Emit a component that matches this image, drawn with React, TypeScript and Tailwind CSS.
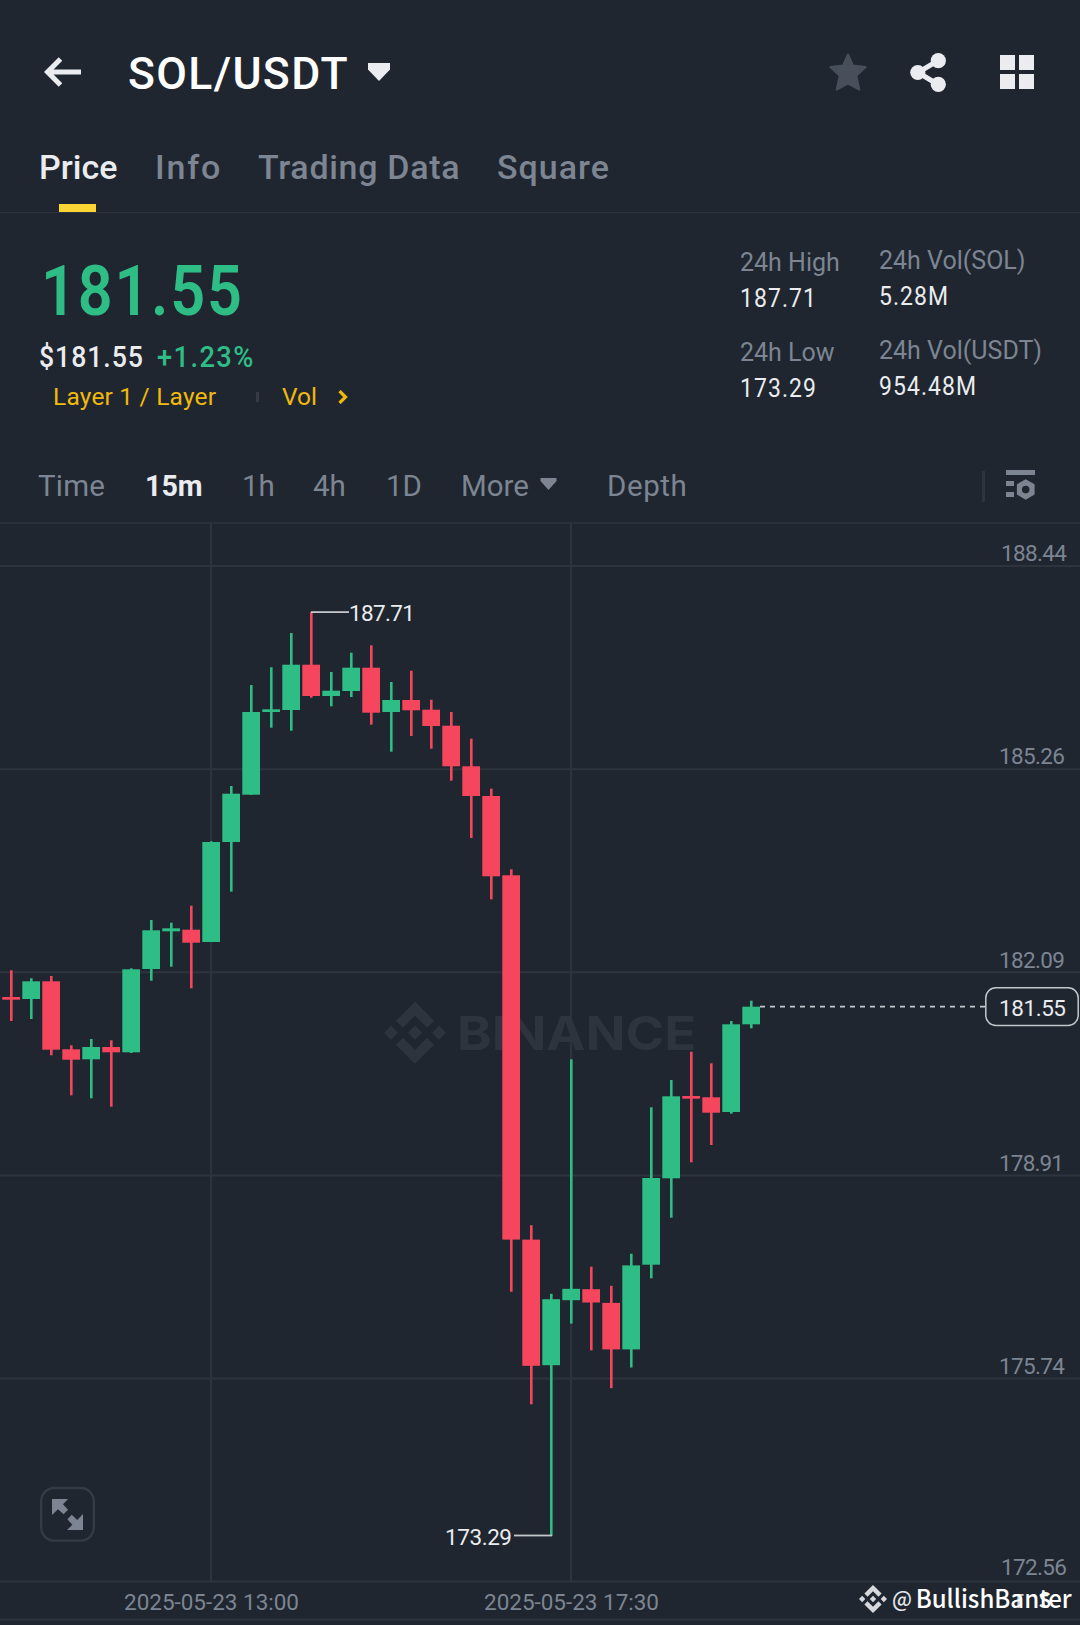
import React from "react";

type Candle = [high: number, top: number, bottom: number, low: number, up: boolean];

const GREEN = "#2ebd85";
const RED = "#f6465d";
const GRID = "#2d343d";
const MUTED = "#7c8591";
const LIGHT = "#eaecef";

// y positions of each candle, left to right, 20px apart
const candles: Candle[] = [
  [970.3, 997, 999.7, 1021, false],
  [978.3, 981.3, 999, 1019, true],
  [976, 981.3, 1049.7, 1055.3, false],
  [1045.3, 1049.3, 1059.7, 1095.3, false],
  [1039, 1047, 1059.3, 1098.3, true],
  [1040.3, 1047, 1052.3, 1106.7, false],
  [968.3, 969.3, 1052.3, 1053, true],
  [920, 930.3, 969, 980.7, true],
  [922.7, 928.3, 931.3, 966.7, true],
  [905.7, 929.7, 942.7, 988.3, false],
  [841.3, 842, 942, 942, true],
  [786, 793.7, 842, 891.7, true],
  [685, 712, 794.7, 794.7, true],
  [667.3, 709.3, 712, 727.7, true],
  [633, 664.7, 710, 730.7, true],
  [612, 664.7, 696, 697.7, false],
  [672, 690.7, 696, 706.3, true],
  [652.7, 667.7, 691, 697, true],
  [645.3, 667.7, 712.7, 724.7, false],
  [682, 700, 712, 751.7, true],
  [670.7, 700, 710.3, 736, false],
  [699.7, 709.7, 726, 748.7, false],
  [712, 725.7, 766.3, 780.7, false],
  [738.7, 766.3, 796, 838, false],
  [788.7, 796, 876.3, 899.3, false],
  [869.3, 875.3, 1239.6, 1291.8, false],
  [1225.2, 1239.6, 1365.8, 1404.3, false],
  [1293.8, 1299.2, 1365.2, 1535.9, true],
  [1059.3, 1288.8, 1300.2, 1323.6, true],
  [1266.7, 1289.2, 1302.5, 1350.4, false],
  [1285.8, 1302.9, 1349.4, 1388.2, false],
  [1253.7, 1265.4, 1349.4, 1367.5, true],
  [1107.3, 1178, 1264.7, 1278.3, true],
  [1080, 1096.3, 1178.3, 1217.7, true],
  [1051.7, 1096, 1098.7, 1162.3, false],
  [1063.3, 1097.3, 1112.7, 1145, false],
  [1021, 1024.3, 1112, 1113.7, true],
  [1000.7, 1006.7, 1024.3, 1028.3, true],
];

const priceLevels = [
  { y: 566, label: "188.44", x: 1001, textY: 561, width: 66 },
  { y: 769.3, label: "185.26", x: 999, textY: 764, width: 66 },
  { y: 972.3, label: "182.09", x: 999, textY: 968, width: 66 },
  { y: 1175.5, label: "178.91", x: 999, textY: 1170.7, width: 65 },
  { y: 1378.5, label: "175.74", x: 999, textY: 1373.7, width: 66 },
  { y: 1581.5, label: "172.56", x: 1001, textY: 1574.7, width: 66 },
];

const timeMarks = [
  { x: 211, label: "2025-05-23 13:00", textX: 124 },
  { x: 571, label: "2025-05-23 17:30", textX: 484 },
];

function BinanceMark({ x, y, size, fill }: { x: number; y: number; size: number; fill: string }) {
  return (
    <svg x={x} y={y} width={size} height={size} viewBox="0 0 126.61 126.61" fill={fill}>
      <path d="M38.73 53.2l24.59-24.58 24.6 24.6 14.3-14.31L63.32 0l-38.9 38.9z" />
      <path d="M0 63.31L14.3 49l14.31 14.31-14.31 14.3z" />
      <path d="M38.73 73.41l24.59 24.59 24.6-24.6 14.31 14.29-38.9 38.91-38.91-38.88z" />
      <path d="M98 63.31L112.3 49l14.31 14.3-14.31 14.32z" />
      <path d="M77.83 63.3L63.32 48.78 48.8 63.3l14.52 14.51z" />
    </svg>
  );
}

function Header() {
  return (
    <header className="flex h-[144px] items-center pl-[44px] pr-[46px]">
      <svg className="h-[30px] w-[37px]" viewBox="0 0 37 30" fill="none" stroke={LIGHT} strokeWidth="5">
        <path d="M37 15H4M16.5 2L3.5 15l13 13" />
      </svg>
      <h1 className="mt-[5px] ml-[47px] w-[220px] text-[44.5px] leading-none font-medium tracking-[1.35px] whitespace-nowrap text-white">
        SOL/USDT
      </h1>
      <svg className="ml-[20px] h-[18px] w-[22px]" viewBox="0 0 22 18" fill={LIGHT}>
        <path d="M0 0h22v6.5L11 18 0 6.5z" />
      </svg>
      <div className="ml-auto flex items-center">
        <svg className="h-[38px] w-[38px]" viewBox="0 0 38 38" fill="#474f5a" stroke="#474f5a" strokeWidth="2" strokeLinejoin="round">
          <path d="M19 1.5l4.9 11 12.7 1.5-9.3 8.8 3 13.7L19 30.6 7.7 36.5l3-13.7L1.4 14l12.7-1.5z" />
        </svg>
        <svg className="ml-[43px] h-[39px] w-[37px]" viewBox="0 0 37 39" fill={LIGHT}>
          <path d="M28 7.7L8 19.5l20 12" fill="none" stroke={LIGHT} strokeWidth="5" />
          <circle cx="28.3" cy="7.7" r="7.6" />
          <circle cx="7.8" cy="19.5" r="7.6" />
          <circle cx="28.3" cy="31.3" r="7.6" />
        </svg>
        <div className="ml-[53px] grid grid-cols-2 gap-[4px]">
          <i className="h-[15px] w-[15px] bg-[#eaecef]" />
          <i className="h-[15px] w-[15px] bg-[#eaecef]" />
          <i className="h-[15px] w-[15px] bg-[#eaecef]" />
          <i className="h-[15px] w-[15px] bg-[#eaecef]" />
        </div>
      </div>
    </header>
  );
}

function Tabs() {
  return (
    <nav className="flex h-[69px] border-b border-[#2d343d] pl-[39px] text-[34px] leading-[46px] font-medium whitespace-nowrap text-[#7c8591]">
      <div className="flex w-[116px] flex-col text-[#eaecef]">
        <span>Price</span>
        <span className="mt-auto ml-[20px] h-[8px] w-[37px] bg-[#fcd535]" />
      </div>
      <span className="w-[103px] tracking-[1.8px]">Info</span>
      <span className="w-[239px] tracking-[0.7px]">Trading Data</span>
      <span className="tracking-[1px]">Square</span>
    </nav>
  );
}

function Stat({ label, value }: { label: string; value: string }) {
  return (
    <div className="h-[90px] whitespace-nowrap">
      <div className="h-[35px] text-[25px] leading-[35px] text-[#7c8591]">{label}</div>
      <div className="h-[35px] origin-left scale-x-[.9] text-[25.5px] leading-[36px] tracking-[1.2px] text-[#eaecef]">{value}</div>
    </div>
  );
}

function PriceSummary() {
  return (
    <section className="flex h-[237px] whitespace-nowrap">
      <div className="w-[740px] pt-[44px] pl-[39px]">
        <div className="ml-[2px] h-[70px] origin-left scale-x-[.88] text-[69.5px] leading-[70px] font-semibold tracking-[2px] text-[#2ebd85]">
          181.55
        </div>
        <div className="mt-[10px] flex h-[40px] text-[29px] leading-[41px] font-medium">
          <span className="w-[118px] origin-left scale-x-[.92] tracking-[1px] text-[#eaecef]">$181.55</span>
          <span className="origin-left scale-x-[.94] tracking-[1.5px] text-[#2ebd85]">+1.23%</span>
        </div>
        <div className="mt-[5px] flex h-[30px] items-center text-[24.5px] leading-[30px] text-[#f0b90b]">
          <span className="ml-[14px] w-[203px] tracking-[0.2px]">Layer 1 / Layer</span>
          <span className="h-[10px] w-[3px] bg-[#333b47]" />
          <span className="ml-[23px] w-[56px]">Vol</span>
          <svg className="h-[14px] w-[10px]" viewBox="0 0 10 14" fill="none" stroke="#f0b90b" strokeWidth="3.2">
            <path d="M1.5 1l6 6-6 6" />
          </svg>
        </div>
      </div>
      <div className="w-[139px] pt-[32px]">
        <Stat label="24h High" value="187.71" />
        <Stat label="24h Low" value="173.29" />
      </div>
      <div className="pt-[30px]">
        <Stat label="24h Vol(SOL)" value="5.28M" />
        <Stat label="24h Vol(USDT)" value="954.48M" />
      </div>
    </section>
  );
}

function Intervals() {
  return (
    <section className="flex h-[74px] items-center border-b-2 border-[#2a3139] pl-[38px] text-[29.5px] whitespace-nowrap text-[#7c8591]">
      <span className="w-[107px] tracking-[0.2px]">Time</span>
      <span className="w-[97px] origin-left scale-x-[.97] font-bold text-[#eaecef]">15m</span>
      <span className="w-[71px]">1h</span>
      <span className="w-[73px]">4h</span>
      <span className="w-[75px]">1D</span>
      <span className="w-[79px]">More</span>
      <svg className="-mt-[5px] h-[12px] w-[17px]" viewBox="0 0 17 12" fill={MUTED}>
        <path d="M.5 0h16v3l-8 9-8-9z" />
      </svg>
      <span className="ml-[50px] tracking-[0.6px]">Depth</span>
      <span className="mr-[21px] ml-auto h-[31px] w-[3px] bg-[#2d343d]" />
      <svg className="-mt-[3px] mr-[45px] h-[30px] w-[29px]" viewBox="0 0 29 30" fill={MUTED}>
        <path d="M0 0h29v5H0zM0 11h8v5H0zM0 22h8v5H0z" />
        <path fillRule="evenodd" d="M19.7 9.3l8.9 5v10.2l-8.9 5.2-8.8-5.2V14.3zM19.7 15.8a3.8 3.8 0 100 7.6 3.8 3.8 0 000-7.6z" />
      </svg>
    </section>
  );
}

function Chart() {
  return (
    <svg className="block h-[1101px] w-[1080px]" viewBox="0 524 1080 1101" fontSize="22.5">
      {/* grid */}
      <g stroke={GRID} strokeWidth="2">
        {priceLevels.map((level) => (
          <line key={level.label} x1="0" x2="1080" y1={level.y} y2={level.y} />
        ))}
        {timeMarks.map((mark) => (
          <line key={mark.x} x1={mark.x} x2={mark.x} y1="524" y2="1581.5" />
        ))}
        <line x1="0" x2="1080" y1="1619.5" y2="1619.5" />
      </g>

      {/* watermark */}
      <BinanceMark x={384} y={1001.7} size={62} fill="#2d343d" />
      <text x="457" y="1049.5" fontSize="47" fontWeight="700" fontFamily="Inter, sans-serif" textLength="239" lengthAdjust="spacingAndGlyphs" fill="#2d343d">
        BINANCE
      </text>

      {/* candles */}
      {candles.map(([high, top, bottom, low, up], i) => (
        <g key={i} fill={up ? GREEN : RED}>
          <rect x={10 + i * 20} y={high} width="2.6" height={low - high} />
          <rect x={2.3 + i * 20} y={top} width="17.7" height={bottom - top} />
        </g>
      ))}

      {/* high and low callouts */}
      <g fill={LIGHT}>
        <rect x="311" y="611.2" width="38" height="1.8" fill="#c3c7cc" />
        <text x="349" y="621" textLength="66" lengthAdjust="spacing">187.71</text>
        <rect x="514" y="1534.6" width="38" height="1.8" fill="#c3c7cc" />
        <text x="445" y="1544.5" textLength="67" lengthAdjust="spacing">173.29</text>
      </g>

      {/* price axis */}
      <g fill={MUTED}>
        {priceLevels.map((level) => (
          <text key={level.label} x={level.x} y={level.textY} textLength={level.width} lengthAdjust="spacing">
            {level.label}
          </text>
        ))}
        {timeMarks.map((mark) => (
          <text key={mark.label} x={mark.textX} y="1609.5" textLength="175" lengthAdjust="spacing">
            {mark.label}
          </text>
        ))}
      </g>

      {/* current price */}
      <line x1="760" x2="985" y1="1006.6" y2="1006.6" stroke="#c3c7cc" strokeWidth="1.8" strokeDasharray="5 5" />
      <rect x="985.8" y="987.8" width="92.4" height="37.6" rx="10" fill="#1f2630" stroke="#c3c7cc" strokeWidth="1.5" />
      <text x="999" y="1016" textLength="67" lengthAdjust="spacing" fill={LIGHT}>181.55</text>

      {/* full screen button */}
      <rect x="41.2" y="1488" width="52.6" height="52.6" rx="13" fill="none" stroke="#333b44" strokeWidth="2.4" />
      <g fill={MUTED}>
        <path d="M52 1499h16l-5 5.2 5 5.6-4.4 4.4-5.6-5-6 5.8z" />
        <path d="M83 1530H67l5.4-5.3-5-5.4 4.4-4.5 5.4 5.2 5.8-6z" />
      </g>

      {/* author signature */}
      <g fontFamily="'Noto Sans CJK SC', sans-serif" fontWeight="500" fill="#ffffff">
        <BinanceMark x={859} y={1585} size={28} fill="#d5d8dc" />
        <text x="892" y="1607" fontSize="21" textLength="20" lengthAdjust="spacingAndGlyphs" fill="#e3e5e8">@</text>
        <text x="915.7" y="1608" fontSize="25" textLength="156" lengthAdjust="spacingAndGlyphs">BullishBanter</text>
        <text x="1013" y="1608" fontSize="18" fillOpacity=".8">T</text>
        <text x="1038.5" y="1608" fontSize="21">S</text>
      </g>
    </svg>
  );
}

export default function App() {
  return (
    <main className="h-[1625px] w-[1080px] overflow-hidden bg-[#1f2630] font-[Roboto,sans-serif]">
      <Header />
      <Tabs />
      <PriceSummary />
      <Intervals />
      <Chart />
    </main>
  );
}
